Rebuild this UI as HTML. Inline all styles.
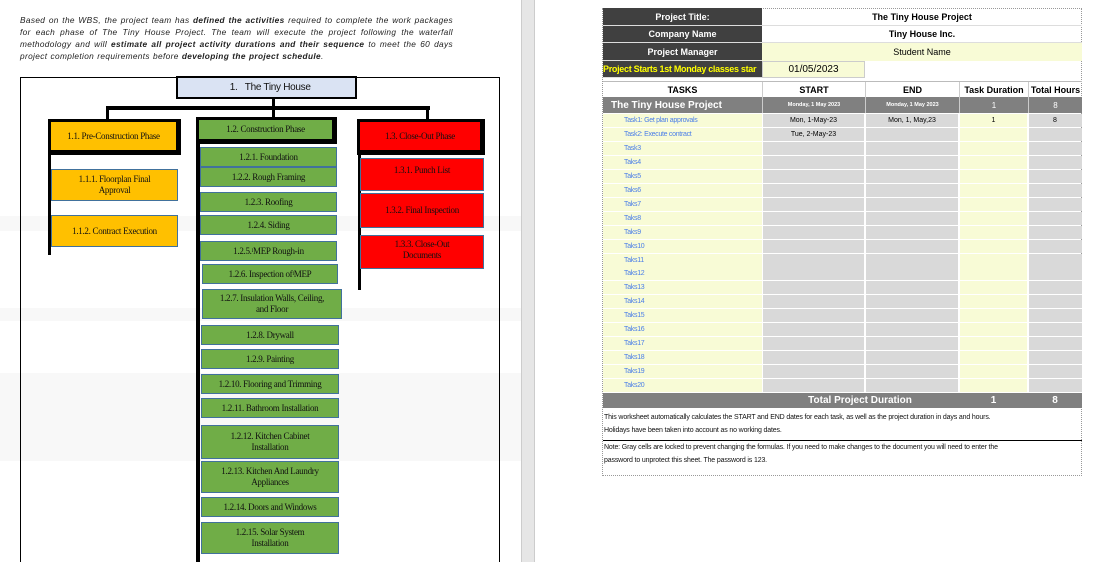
<!DOCTYPE html>
<html style="overflow:hidden;height:562px"><head><meta charset="utf-8"><style>
*{margin:0;padding:0;box-sizing:border-box}
body{width:1102px;height:562px;position:relative;overflow:hidden;background:#fff;font-family:"Liberation Sans",sans-serif}
.a{position:absolute}
.band{position:absolute;left:0;width:521px;background:#f8f8f8}
.para{position:absolute;left:20px;top:14px;width:433px;font-size:8.3px;line-height:12px;font-style:italic;color:#222;text-align:justify;letter-spacing:0.35px;word-spacing:0.5px}
.bx{position:absolute;display:flex;align-items:center;justify-content:center;text-align:center;font-family:"Liberation Serif",serif;font-size:9px;line-height:11px;color:#111;letter-spacing:-0.3px}
.g{background:#70ad47;border:1px solid #41719c}
.o{background:#ffc000;border:1px solid #41719c}
.r{background:#ff0000;border:1px solid #41719c}
.k{border:3px solid #000;border-right-width:5px;border-bottom-width:5px}
.ln{position:absolute;background:#000}
.c{position:absolute;display:flex;align-items:center;justify-content:center;font-size:9px;color:#000;white-space:nowrap;overflow:hidden}
.dk{background:#404040;color:#fff;font-weight:bold;border-bottom:1px solid #ddd}
.t{position:absolute;left:603px;width:159px;height:13px;background:#f8fbd6;font-size:7px;color:#4a7ee8;padding-left:21px;line-height:13px;letter-spacing:-0.3px}
.gr{position:absolute;height:13px;background:#d9d9d9}
.yl{position:absolute;height:13px;background:#f8fbd6}
</style></head><body>
<div class="band" style="top:216px;height:15px"></div>
<div class="band" style="top:308px;height:13px"></div>
<div class="band" style="top:373px;height:88px"></div>
<div class="para">Based on the WBS, the project team has <b>defined the activities</b> required to complete the work packages for each phase of The Tiny House Project. The team will execute the project following the waterfall methodology and will <b>estimate all project activity durations and their sequence</b> to meet the 60 days project completion requirements before <b>developing the project schedule</b>.</div>
<div class="a" style="left:20px;top:77px;width:480px;height:500px;border:1px solid #000"></div>

<div class="bx" style="left:176px;top:76px;width:181px;height:23px;background:#dae3f3;border:2px solid #000;font-family:'Liberation Sans',sans-serif;font-size:10px">&nbsp;&nbsp;&nbsp;1.&nbsp;&nbsp; The Tiny House</div>
<div class="ln" style="left:106px;top:106px;width:324px;height:4px"></div>
<div class="ln" style="left:272px;top:98px;width:3px;height:20px"></div>
<div class="ln" style="left:106px;top:106px;width:3px;height:14px"></div>
<div class="ln" style="left:426px;top:106px;width:3px;height:14px"></div>

<div class="bx o k" style="left:48px;top:119px;width:133px;height:36px">1.1. Pre-Construction Phase</div>
<div class="ln" style="left:48px;top:153px;width:3px;height:102px"></div>
<div class="bx o" style="left:51px;top:169px;width:127px;height:32px">1.1.1. Floorplan Final<br>Approval</div>
<div class="bx o" style="left:51px;top:215px;width:127px;height:32px">1.1.2. Contract Execution</div>

<div class="bx g k" style="left:196px;top:117px;width:141px;height:27px">1.2. Construction Phase</div>
<div class="ln" style="left:196px;top:143px;width:4px;height:420px"></div>
<div class="bx g" style="left:200px;top:147px;width:137px;height:20px">1.2.1. Foundation</div>
<div class="bx g" style="left:200px;top:167px;width:137px;height:20px">1.2.2. Rough Framing</div>
<div class="bx g" style="left:200px;top:192px;width:137px;height:20px">1.2.3. Roofing</div>
<div class="bx g" style="left:200px;top:215px;width:137px;height:20px">1.2.4. Siding</div>
<div class="bx g" style="left:200px;top:241px;width:137px;height:20px">1.2.5. <sup style="font-size:5px">I</sup>MEP Rough-in</div>
<div class="bx g" style="left:202px;top:264px;width:136px;height:20px">1.2.6. Inspection of <sup style="font-size:5px">I</sup>MEP</div>
<div class="bx g" style="left:202px;top:289px;width:140px;height:30px">1.2.7. Insulation Walls, Ceiling,<br>and Floor</div>
<div class="bx g" style="left:201px;top:325px;width:138px;height:20px">1.2.8. Drywall</div>
<div class="bx g" style="left:201px;top:349px;width:138px;height:20px">1.2.9. Painting</div>
<div class="bx g" style="left:201px;top:374px;width:138px;height:20px">1.2.10. Flooring and Trimming</div>
<div class="bx g" style="left:201px;top:398px;width:138px;height:20px">1.2.11. Bathroom Installation</div>
<div class="bx g" style="left:201px;top:425px;width:138px;height:34px">1.2.12. Kitchen Cabinet<br>Installation</div>
<div class="bx g" style="left:201px;top:461px;width:138px;height:32px">1.2.13. Kitchen And Laundry<br>Appliances</div>
<div class="bx g" style="left:201px;top:497px;width:138px;height:20px">1.2.14. Doors and Windows</div>
<div class="bx g" style="left:201px;top:522px;width:138px;height:32px">1.2.15. Solar System<br>Installation</div>

<div class="bx r k" style="left:357px;top:119px;width:128px;height:36px">1.3. Close-Out Phase</div>
<div class="ln" style="left:358px;top:153px;width:3px;height:137px"></div>
<div class="bx r" style="left:360px;top:158px;width:124px;height:33px;align-items:flex-start;padding-top:6px">1.3.1. Punch List</div>
<div class="bx r" style="left:360px;top:193px;width:124px;height:35px">1.3.2. Final Inspection</div>
<div class="bx r" style="left:360px;top:235px;width:124px;height:34px;align-items:flex-start;padding-top:3px">1.3.3. Close-Out<br>Documents</div>

<div class="a" style="left:521px;top:0;width:14px;height:562px;background:#e6e6e6;border-left:1px solid #ccc;border-right:1px solid #ccc"></div>

<!-- spreadsheet -->
<div class="a" style="left:602px;top:8px;width:480px;height:468px;border:1px dotted #999"></div>
<div class="c dk" style="left:603px;top:8px;width:159px;height:18px">Project Title:</div>
<div class="c dk" style="left:603px;top:26px;width:159px;height:17px">Company Name</div>
<div class="c dk" style="left:603px;top:43px;width:159px;height:18px">Project Manager</div>
<div class="c dk" style="left:603px;top:61px;width:159px;height:17px;color:#ffff00;justify-content:flex-start;letter-spacing:-0.3px">Project Starts 1st Monday classes star</div>
<div class="c" style="left:762px;top:8px;width:320px;height:18px;font-weight:bold;border-bottom:1px solid #ddd">The Tiny House Project</div>
<div class="c" style="left:762px;top:26px;width:320px;height:17px;font-weight:bold;border-bottom:1px solid #ddd">Tiny House Inc.</div>
<div class="c" style="left:762px;top:43px;width:320px;height:18px;background:#f8fbd6">Student Name</div>
<div class="c" style="left:762px;top:61px;width:103px;height:17px;background:#f8fbd6;border:1px solid #ccc;font-size:10px">01/05/2023</div>
<div class="a" style="left:603px;top:81px;width:479px;height:1px;background:#bbb"></div>
<div class="c" style="left:603px;top:82px;width:159px;height:15px;font-weight:bold">TASKS</div>
<div class="c" style="left:762px;top:82px;width:103px;height:15px;font-weight:bold;border-left:1px solid #ccc">START</div>
<div class="c" style="left:865px;top:82px;width:94px;height:15px;font-weight:bold;border-left:1px solid #ccc">END</div>
<div class="c" style="left:959px;top:82px;width:69px;height:15px;font-weight:bold;border-left:1px solid #ccc">Task Duration</div>
<div class="c" style="left:1028px;top:82px;width:54px;height:15px;font-weight:bold;border-left:1px solid #ccc">Total Hours</div>
<div class="a" style="left:603px;top:97px;width:479px;height:16px;background:#808080"></div>
<div class="c" style="left:611px;top:97px;width:150px;height:16px;color:#fff;font-weight:bold;justify-content:flex-start;font-size:10px">The Tiny House Project</div>
<div class="c" style="left:762px;top:97px;width:103px;height:16px;color:#fff;font-size:5.5px;font-weight:bold;border-left:1px solid #ccc">Monday, 1 May 2023</div>
<div class="c" style="left:865px;top:97px;width:94px;height:16px;color:#fff;font-size:5.5px;font-weight:bold;border-left:1px solid #ccc">Monday, 1 May 2023</div>
<div class="c" style="left:959px;top:97px;width:69px;height:16px;color:#fff;font-size:8px;border-left:1px solid #ccc">1</div>
<div class="c" style="left:1028px;top:97px;width:54px;height:16px;color:#fff;font-size:8px;border-left:1px solid #ccc">8</div>

<div id="rows"></div>
<script>
var h='',names=['Task1:  Get plan approvals','Task2: Execute contract','Task3'];
for(var i=0;i<20;i++){var y=114+i*13.95;var n=i<3?names[i]:'Taks'+(i+1);
h+='<div class="t" style="top:'+y+'px">'+n+'</div>';
h+='<div class="gr" style="left:763px;top:'+y+'px;width:101px"></div>';
h+='<div class="gr" style="left:866px;top:'+y+'px;width:92px"></div>';
h+='<div class="yl" style="left:960px;top:'+y+'px;width:67px"></div>';
h+='<div class="gr" style="left:1029px;top:'+y+'px;width:53px"></div>';}
document.getElementById('rows').innerHTML=h;
</script>
<div class="c" style="left:762px;top:114px;width:103px;height:13px;font-size:7px">Mon, 1-May-23</div>
<div class="c" style="left:865px;top:114px;width:94px;height:13px;font-size:7px">Mon, 1, May,23</div>
<div class="c" style="left:959px;top:114px;width:69px;height:13px;font-size:7px">1</div>
<div class="c" style="left:1028px;top:114px;width:54px;height:13px;font-size:7px">8</div>
<div class="c" style="left:762px;top:128px;width:103px;height:13px;font-size:7px">Tue, 2-May-23</div>

<div class="a" style="left:603px;top:393px;width:479px;height:15px;background:#808080"></div>
<div class="c" style="left:780px;top:393px;width:160px;height:15px;color:#fff;font-weight:bold;font-size:10px">Total Project Duration</div>
<div class="c" style="left:959px;top:393px;width:69px;height:15px;color:#fff;font-weight:bold;font-size:10px">1</div>
<div class="c" style="left:1028px;top:393px;width:54px;height:15px;color:#fff;font-weight:bold;font-size:10px">8</div>
<div class="a" style="left:604px;top:412px;width:478px;font-size:7px;line-height:12.5px;color:#111;letter-spacing:-0.15px">This worksheet automatically calculates the START and END dates for each task, as well as the project duration in days and hours.<br>Holidays have been taken into account as no working dates.</div>
<div class="a" style="left:603px;top:440px;width:479px;height:1px;background:#000"></div>
<div class="a" style="left:604px;top:442px;width:478px;font-size:7px;line-height:12.5px;color:#111;letter-spacing:-0.15px">Note: Gray cells are locked to prevent changing the formulas. If you need to make changes to the document you will need to enter the<br>password to unprotect this sheet. The password is 123.</div>
</body></html>
